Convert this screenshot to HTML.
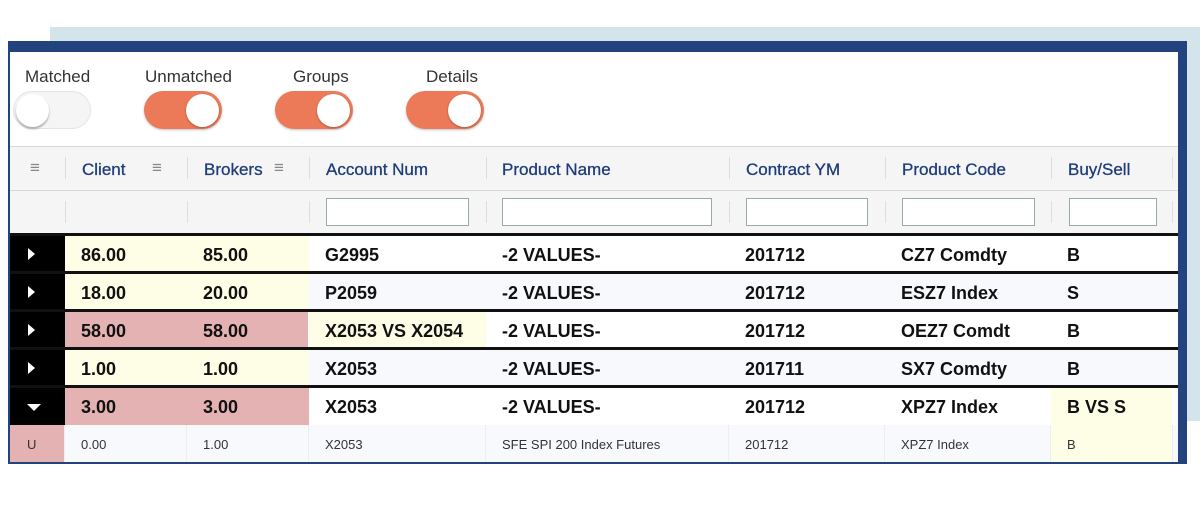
<!DOCTYPE html>
<html><head><style>
*{margin:0;padding:0;box-sizing:border-box}
body{width:1200px;height:506px;background:#fff;position:relative;overflow:hidden;font-family:"Liberation Sans",sans-serif}
.a{position:absolute}
.lbl{font-size:17px;color:#333;top:67px}
.tg{top:91px;width:78px;height:38px;border-radius:19px;background:#ec7a58;box-shadow:0 1px 2px rgba(0,0,0,.25)}
.tg i{position:absolute;right:3px;top:3px;width:33px;height:33px;border-radius:50%;background:#fff;box-shadow:0 1px 2px rgba(0,0,0,.3)}
.hd{font-size:17px;color:#1f3d7a;top:160px;-webkit-text-stroke:0.3px #1f3d7a}
.sep{width:1px;background:#ddd}
.row{position:absolute;left:10px;width:1168px;height:38px;border-top:3px solid #111}
.c{position:absolute;top:0;height:100%;font-weight:bold;font-size:18px;color:#111;padding:9px 0 0 16px;white-space:nowrap}
.ex{left:0;width:55px;background:#000;padding:0}
.tri{position:absolute;left:18px;top:12px;width:0;height:0;border-top:6px solid transparent;border-bottom:6px solid transparent;border-left:7px solid #fff}
.dn{position:absolute;left:17px;top:16px;border-left:7px solid transparent;border-right:7px solid transparent;border-top:7px solid #fff}
.Y{background:#fefee6}.P{background:#e4b2b2}.W{background:#fff}.L{background:#f8f9fc}
.inp{position:absolute;top:198px;height:28px;border:1px solid #9aa;background:#fff}
.d{position:absolute;top:0;height:100%;font-size:13px;color:#333;padding:12px 0 0 16px;border-right:1px solid #eee}
</style></head><body>
<div class="a" style="left:50px;top:27px;width:1150px;height:394px;background:#d3e4ea"></div>
<div class="a" style="left:8px;top:41px;width:1179px;height:423px;background:#22437e"></div>
<div class="a" style="left:10px;top:52px;width:1168px;height:410px;background:#fff"></div>

<div class="a lbl" style="left:25px">Matched</div>
<div class="a lbl" style="left:145px">Unmatched</div>
<div class="a lbl" style="left:293px">Groups</div>
<div class="a lbl" style="left:426px">Details</div>
<div class="a" style="left:13px;top:91px;width:78px;height:38px;border-radius:19px;background:#f5f5f5;border:1px solid #e4e4e4"><i style="position:absolute;left:2px;top:2px;width:33px;height:33px;border-radius:50%;background:#fff;box-shadow:0 2px 2px rgba(0,0,0,.3)"></i></div>
<div class="a tg" style="left:144px"><i></i></div>
<div class="a tg" style="left:275px"><i></i></div>
<div class="a tg" style="left:406px"><i></i></div>

<div class="a" style="left:10px;top:146px;width:1168px;height:88px;background:#f5f5f5;border-top:1px solid #d8d8d8"></div>
<div class="a" style="left:10px;top:190px;width:1168px;height:1px;background:#d8d8d8"></div>
<div class="a" style="left:30px;top:158px;color:#888;font-size:17px">≡</div>
<div class="a" style="left:152px;top:158px;color:#888;font-size:17px">≡</div>
<div class="a" style="left:274px;top:158px;color:#888;font-size:17px">≡</div>
<div class="a hd" style="left:82px">Client</div>
<div class="a hd" style="left:204px">Brokers</div>
<div class="a hd" style="left:326px">Account Num</div>
<div class="a hd" style="left:502px">Product Name</div>
<div class="a hd" style="left:746px">Contract YM</div>
<div class="a hd" style="left:902px">Product Code</div>
<div class="a hd" style="left:1068px">Buy/Sell</div>
<div class="a sep" style="left:65px;top:157px;height:22px"></div><div class="a sep" style="left:65px;top:201px;height:22px"></div>
<div class="a sep" style="left:187px;top:157px;height:22px"></div><div class="a sep" style="left:187px;top:201px;height:22px"></div>
<div class="a sep" style="left:309px;top:157px;height:22px"></div><div class="a sep" style="left:309px;top:201px;height:22px"></div>
<div class="a sep" style="left:486px;top:157px;height:22px"></div><div class="a sep" style="left:486px;top:201px;height:22px"></div>
<div class="a sep" style="left:729px;top:157px;height:22px"></div><div class="a sep" style="left:729px;top:201px;height:22px"></div>
<div class="a sep" style="left:885px;top:157px;height:22px"></div><div class="a sep" style="left:885px;top:201px;height:22px"></div>
<div class="a sep" style="left:1051px;top:157px;height:22px"></div><div class="a sep" style="left:1051px;top:201px;height:22px"></div>
<div class="a sep" style="left:1172px;top:157px;height:22px"></div><div class="a sep" style="left:1172px;top:201px;height:22px"></div>
<div class="inp" style="left:326px;width:143px"></div>
<div class="inp" style="left:502px;width:210px"></div>
<div class="inp" style="left:746px;width:122px"></div>
<div class="inp" style="left:902px;width:133px"></div>
<div class="inp" style="left:1069px;width:88px"></div>

<div class="row" style="top:233px">
<div class="c ex"><span class="tri"></span></div>
<div class="c Y" style="left:55px;width:122px">86.00</div><div class="c Y" style="left:177px;width:122px">85.00</div>
<div class="c W" style="left:299px;width:869px">G2995</div>
<div class="c" style="left:476px">-2 VALUES-</div><div class="c" style="left:719px">201712</div><div class="c" style="left:875px">CZ7 Comdty</div><div class="c" style="left:1041px">B</div>
</div>
<div class="row" style="top:271px">
<div class="c ex"><span class="tri"></span></div>
<div class="c Y" style="left:55px;width:122px">18.00</div><div class="c Y" style="left:177px;width:122px">20.00</div>
<div class="c L" style="left:299px;width:869px">P2059</div>
<div class="c" style="left:476px">-2 VALUES-</div><div class="c" style="left:719px">201712</div><div class="c" style="left:875px">ESZ7 Index</div><div class="c" style="left:1041px">S</div>
</div>
<div class="row" style="top:309px">
<div class="c ex"><span class="tri"></span></div>
<div class="c P" style="left:55px;width:122px">58.00</div><div class="c P" style="left:177px;width:121px">58.00</div>
<div class="c W" style="left:299px;width:869px"></div>
<div class="c Y" style="left:299px;width:177px">X2053 VS X2054</div>
<div class="c" style="left:476px">-2 VALUES-</div><div class="c" style="left:719px">201712</div><div class="c" style="left:875px">OEZ7 Comdt</div><div class="c" style="left:1041px">B</div>
</div>
<div class="row" style="top:347px">
<div class="c ex"><span class="tri"></span></div>
<div class="c Y" style="left:55px;width:122px">1.00</div><div class="c Y" style="left:177px;width:122px">1.00</div>
<div class="c L" style="left:299px;width:869px">X2053</div>
<div class="c" style="left:476px">-2 VALUES-</div><div class="c" style="left:719px">201711</div><div class="c" style="left:875px">SX7 Comdty</div><div class="c" style="left:1041px">B</div>
</div>
<div class="row" style="top:385px;height:40px">
<div class="c ex"><span class="dn"></span></div>
<div class="c P" style="left:55px;width:122px">3.00</div><div class="c P" style="left:177px;width:122px">3.00</div>
<div class="c W" style="left:299px;width:869px">X2053</div>
<div class="c Y" style="left:1041px;width:121px">B VS S</div>
<div class="c" style="left:476px">-2 VALUES-</div><div class="c" style="left:719px">201712</div><div class="c" style="left:875px">XPZ7 Index</div>
</div>
<div class="a" style="left:10px;top:425px;width:1168px;height:37px;background:#f8f9fc">
<div class="d P" style="left:0;width:55px;padding-left:17px">U</div>
<div class="d" style="left:55px;width:122px">0.00</div><div class="d" style="left:177px;width:122px">1.00</div>
<div class="d" style="left:299px;width:177px">X2053</div><div class="d" style="left:476px;width:243px">SFE SPI 200 Index Futures</div>
<div class="d" style="left:719px;width:156px">201712</div><div class="d" style="left:875px;width:166px">XPZ7 Index</div>
<div class="d Y" style="left:1041px;width:122px">B</div>
</div>
</body></html>
